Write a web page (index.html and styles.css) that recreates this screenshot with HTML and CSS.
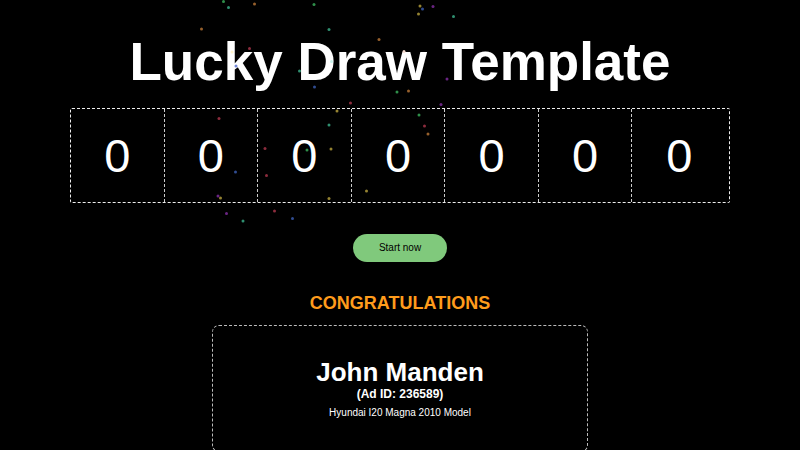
FILE: index.html
```html
<!DOCTYPE html>
<html lang="en">
  <head>
    <meta charset="UTF-8" />
    <meta name="viewport" content="width=device-width, initial-scale=1.0" />
    <title>Lucky Draw Template</title>
    <link rel="stylesheet" href="styles.css" />
  </head>
  <body>
    <!-- Confetti -->
    <svg class="confetti" viewBox="0 0 800 450" preserveAspectRatio="xMidYMin meet" aria-hidden="true">
      <g fill="#2f8f4a">
        <circle cx="223.5" cy="1.5" r="1.5" />
        <circle cx="314" cy="4.5" r="1.5" />
        <circle cx="397" cy="92" r="1.5" />
        <circle cx="419" cy="115" r="1.5" />
        <circle cx="307" cy="150" r="1.5" />
      </g>
      <g fill="#2f8f70">
        <circle cx="228.5" cy="7.5" r="1.5" />
        <circle cx="329" cy="29.5" r="1.5" />
        <circle cx="453.5" cy="16.5" r="1.5" />
        <circle cx="329" cy="125" r="1.5" />
        <circle cx="243" cy="221" r="1.5" />
        <circle cx="299.5" cy="71" r="1.5" />
      </g>
      <g fill="#97602c">
        <circle cx="254.5" cy="4" r="1.5" />
        <circle cx="201.5" cy="29" r="1.5" />
        <circle cx="379" cy="39.5" r="1.5" />
        <circle cx="408.5" cy="91" r="1.5" />
        <circle cx="428" cy="134" r="1.5" />
      </g>
      <g fill="#958331">
        <circle cx="420" cy="6" r="1.5" />
        <circle cx="418.5" cy="14" r="1.5" />
        <circle cx="337" cy="111" r="1.5" />
        <circle cx="331" cy="149" r="1.5" />
        <circle cx="329" cy="198.5" r="1.5" />
        <circle cx="366.5" cy="191" r="1.5" />
        <circle cx="220.5" cy="198" r="1.5" />
      </g>
      <g fill="#8c2c3d">
        <circle cx="249.5" cy="48.5" r="1.5" />
        <circle cx="350.5" cy="103" r="1.5" />
        <circle cx="219" cy="118.5" r="1.5" />
        <circle cx="265" cy="148.5" r="1.5" />
        <circle cx="266.5" cy="175.5" r="1.5" />
        <circle cx="274.5" cy="211" r="1.5" />
        <circle cx="424.5" cy="126" r="1.5" />
      </g>
      <g fill="#6a2583">
        <circle cx="433" cy="6.5" r="1.5" />
        <circle cx="447" cy="79" r="1.5" />
        <circle cx="441" cy="104.5" r="1.5" />
        <circle cx="218" cy="196" r="1.5" />
        <circle cx="226.5" cy="213.5" r="1.5" />
      </g>
      <g fill="#304c91">
        <circle cx="422.5" cy="9" r="1.5" />
        <circle cx="314.5" cy="87" r="1.5" />
        <circle cx="235.5" cy="172" r="1.5" />
        <circle cx="292.5" cy="218.5" r="1.5" />
      </g>
      <!-- pieces passing in front of the title -->
      <circle cx="236" cy="66" r="1.5" fill="#7186d8" />
      <circle cx="232" cy="52" r="1.5" fill="#fff4cc" />
      <circle cx="331.5" cy="61.5" r="1.5" fill="#c8f5ec" />
      <circle cx="404" cy="51.5" r="1.5" fill="#f7ded2" />
    </svg>

    <main class="draw">
      <h1 class="title">Lucky Draw Template</h1>

      <div class="slots">
        <div class="slot">0</div>
        <div class="slot">0</div>
        <div class="slot">0</div>
        <div class="slot">0</div>
        <div class="slot">0</div>
        <div class="slot">0</div>
        <div class="slot">0</div>
      </div>

      <button class="start-btn" type="button">Start now</button>

      <h2 class="congrats">CONGRATULATIONS</h2>

      <div class="winner">
        <h3 class="winner-name">John Manden</h3>
        <h4 class="winner-id">(Ad ID: 236589)</h4>
        <p class="winner-prize">Hyundai I20 Magna 2010 Model</p>
      </div>
    </main>
  </body>
</html>
```
FILE: styles.css
```css
* {
  box-sizing: border-box;
}

body {
  margin: 0;
  overflow: hidden;
  font-family: "Liberation Sans", Arial, sans-serif;
  background-color: #000;
  color: #fff;
}

h1,
h2,
h3,
h4,
p {
  margin: 0;
}

.confetti {
  position: absolute;
  top: 0;
  left: 0;
  width: 100%;
  height: 450px;
  z-index: 1;
  pointer-events: none;
}

.draw {
  display: flex;
  flex-direction: column;
  align-items: center;
  max-width: 700px;
  margin: 0 auto;
  padding: 32px 20px 0;
}

.title {
  font-size: 53px;
  line-height: 60px;
  text-align: center;
}

.slots {
  display: grid;
  grid-template-columns: repeat(7, 1fr);
  width: 100%;
  margin-top: 16px;
  padding-right: 3px;
  border: 1px dashed #eee;
  border-radius: 2px;
}

.slot {
  padding: 20px 0;
  border-right: 1px dashed #ccc;
  font-size: 47px;
  line-height: 53px;
  text-align: center;
}

.slot:last-child {
  border-right: none;
}

.start-btn {
  margin-top: 31px;
  padding: 0 26px;
  border: none;
  border-radius: 14px;
  background: #80c97c;
  color: #000;
  font-family: inherit;
  font-size: 10px;
  line-height: 28px;
  cursor: pointer;
}

.start-btn:hover {
  background: #6fbb6b;
}

.congrats {
  margin-top: 31px;
  color: #ff9c1c;
  font-size: 18px;
  line-height: 20px;
}

.winner {
  width: 100%;
  max-width: 376px;
  margin-top: 12px;
  padding: 32px 20px;
  border: 1px dashed #bbb;
  border-radius: 7px;
  text-align: center;
}

.winner-name {
  font-size: 26px;
  line-height: 28px;
}

.winner-id {
  font-size: 12px;
  line-height: 16px;
}

.winner-prize {
  margin-top: 5px;
  font-size: 10px;
  line-height: 12px;
}
```
